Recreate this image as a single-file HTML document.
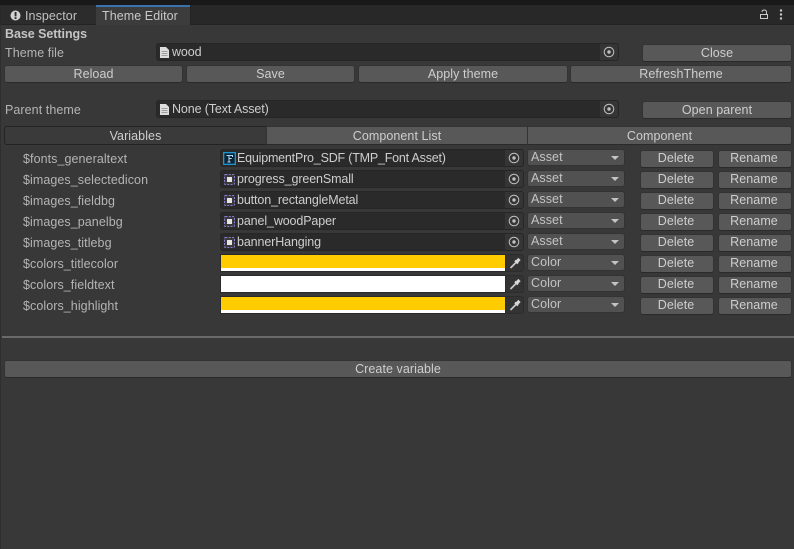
<!DOCTYPE html>
<html><head><meta charset="utf-8"><style>
html,body{margin:0;padding:0;background:#383838}
#p{position:relative;width:794px;height:549px;overflow:hidden;background:#383838;font-family:"Liberation Sans",sans-serif;font-size:12.5px;color:#c4c4c4;letter-spacing:.07px;filter:blur(.3px)}
#p div,#p svg{position:absolute}
.b{background:#585858;border:1px solid #333;border-bottom-color:#2a2a2a;border-radius:3px;box-sizing:border-box;text-align:center;color:#cecece;white-space:nowrap}
.t{height:18px;line-height:16px}
.x{width:74px;height:18px;line-height:15px;padding-right:2px}
.l{white-space:nowrap;line-height:16px;color:#b4b4b4}
.f{background:#2a2a2a;border:1px solid #262626;border-radius:3px;box-sizing:border-box;white-space:nowrap;color:#cecece;letter-spacing:-.12px}
.p{background:#353535;top:0;bottom:0;right:0;width:18px;border-radius:0 2px 2px 0}
.d{background:#515151;border:1px solid #333;border-radius:3px;box-sizing:border-box;color:#c4c4c4;padding-left:3px;line-height:14px}
.d i{position:absolute;right:5px;top:6px;width:0;height:0;border-left:4px solid transparent;border-right:4px solid transparent;border-top:4px solid #c4c4c4}
.s{background:#ffcc00;border:1px solid #2a2a2a;box-sizing:border-box;height:18px;left:220px;width:286px}
.w{position:absolute;left:0;right:0;bottom:0;height:3px;background:#fff}
.e{left:505px;width:19px;height:18px;background:#333;border:1px solid #2c2c2c;border-radius:0 3px 3px 0;box-sizing:border-box}
</style></head><body><div id="p">
<div style="left:0;top:0;width:794px;height:5px;background:#191919"></div>
<div style="left:0;top:5px;width:794px;height:19px;background:#282828"></div>
<div style="left:0;top:24px;width:794px;height:1px;background:#232323"></div>
<div style="left:1px;top:6px;width:95px;height:18px;background:#2c2c2c"></div>
<div style="left:96px;top:5px;width:94px;height:20px;background:#3c3c3c;border-right:1px solid #232323"></div>
<div style="left:96px;top:5px;width:94px;height:2px;background:#3a72b0"></div>
<svg style="left:10px;top:10px" width="11" height="11" viewBox="0 0 11 11"><circle cx="5.5" cy="5.5" r="5" fill="#d2d2d2"/><rect x="4.6" y="2" width="1.9" height="4.4" fill="#2c2c2c"/><rect x="4.6" y="7.2" width="1.9" height="1.8" fill="#2c2c2c"/></svg>
<div class="l" style="left:25px;top:8px;color:#c0c0c0">Inspector</div>
<div class="l" style="left:102px;top:8px;color:#c8c8c8">Theme Editor</div>
<svg style="left:759px;top:9px" width="10" height="11" viewBox="0 0 10 11" fill="none" stroke="#c8c8c8"><rect x="1.5" y="5.5" width="7" height="4" stroke-width="1"/><path d="M3 3Q3 1 5.2 1T7.5 3V5.5" stroke-width="1"/></svg>
<svg style="left:779px;top:9px" width="4" height="11" viewBox="0 0 4 11" fill="#c8c8c8"><circle cx="2" cy="1.5" r="1.2"/><circle cx="2" cy="5.5" r="1.2"/><circle cx="2" cy="9.5" r="1.2"/></svg>

<div class="l" style="left:5px;top:26px;font-weight:bold;color:#c4c4c4;letter-spacing:-.05px">Base Settings</div>
<div class="l" style="left:5px;top:45px">Theme file</div>
<div class="f" style="left:156px;top:43px;width:463px;height:18px;line-height:17px;padding-left:15px">wood<div class="p"></div>
<svg style="left:3px;top:3px" width="9" height="11" viewBox="0 0 9 11"><path d="M0 0H6L9 3V11H0Z" fill="#ddd"/><path d="M1.5 4.5H7.5M1.5 6.5H7.5M1.5 8.5H7.5" stroke="#888" stroke-width=".7"/></svg>
<svg style="right:3px;top:2px" width="12" height="12" viewBox="0 0 12 12"><circle cx="6" cy="6" r="4.8" fill="none" stroke="#c0c0c0"/><circle cx="6" cy="6" r="1.7" fill="#c0c0c0"/></svg></div>
<div class="b t" style="left:642px;top:44px;width:150px">Close</div>
<div class="b t" style="left:4px;top:65px;width:179px">Reload</div>
<div class="b t" style="left:186px;top:65px;width:169px">Save</div>
<div class="b t" style="left:358px;top:65px;width:210px">Apply theme</div>
<div class="b t" style="left:570px;top:65px;width:222px">RefreshTheme</div>

<div class="l" style="left:5px;top:102px">Parent theme</div>
<div class="f" style="left:156px;top:100px;width:463px;height:18px;line-height:17px;padding-left:15px">None (Text Asset)<div class="p"></div>
<svg style="left:3px;top:3px" width="9" height="11" viewBox="0 0 9 11"><path d="M0 0H6L9 3V11H0Z" fill="#ddd"/><path d="M1.5 4.5H7.5M1.5 6.5H7.5M1.5 8.5H7.5" stroke="#888" stroke-width=".7"/></svg>
<svg style="right:3px;top:2px" width="12" height="12" viewBox="0 0 12 12"><circle cx="6" cy="6" r="4.8" fill="none" stroke="#c0c0c0"/><circle cx="6" cy="6" r="1.7" fill="#c0c0c0"/></svg></div>
<div class="b t" style="left:642px;top:101px;width:150px">Open parent</div>

<div class="b" style="left:4px;top:126px;width:263px;height:19px;line-height:18px;background:#3a3a3a;border-color:#232323;border-radius:3px 0 0 3px">Variables</div>
<div class="b" style="left:266px;top:126px;width:262px;height:19px;line-height:18px;border-radius:0">Component List</div>
<div class="b" style="left:527px;top:126px;width:265px;height:19px;line-height:18px;border-radius:0 3px 3px 0">Component</div>

<div class="l" style="left:23px;top:151px">$fonts_generaltext</div>
<div class="l" style="left:23px;top:172px">$images_selectedicon</div>
<div class="l" style="left:23px;top:193px">$images_fieldbg</div>
<div class="l" style="left:23px;top:214px">$images_panelbg</div>
<div class="l" style="left:23px;top:235px">$images_titlebg</div>
<div class="l" style="left:23px;top:256px">$colors_titlecolor</div>
<div class="l" style="left:23px;top:277px">$colors_fieldtext</div>
<div class="l" style="left:23px;top:298px">$colors_highlight</div>

<div class="f" style="left:220px;top:149px;width:304px;height:18px;line-height:17px;padding-left:16px;letter-spacing:-.2px">EquipmentPro_SDF (TMP_Font Asset)<div class="p"></div>
<svg style="left:2px;top:2px" width="13" height="13" viewBox="0 0 13 13"><rect x=".7" y=".7" width="11.6" height="11.6" fill="#123" stroke="#1ba1e2" stroke-width="1.2"/><path d="M3.5 3.5H9.5V5M6 3.5V10M4.5 10H7.5M6 6.5H8.7" fill="none" stroke="#a5dcf6"/></svg>
<svg style="right:3px;top:2px" width="12" height="12" viewBox="0 0 12 12"><circle cx="6" cy="6" r="4.8" fill="none" stroke="#c0c0c0"/><circle cx="6" cy="6" r="1.7" fill="#c0c0c0"/></svg></div>
<div class="f" style="left:220px;top:170px;width:304px;height:18px;line-height:17px;padding-left:16px">progress_greenSmall<div class="p"></div>
<svg style="left:2px;top:2px" width="13" height="13" viewBox="0 0 13 13"><rect x="1.5" y="1.5" width="10" height="10" rx="1" fill="#3a3a3a" stroke="#8a7cd0" stroke-dasharray="2 1.3"/><rect x="4" y="4" width="5" height="5" fill="#e4e4e4"/></svg>
<svg style="right:3px;top:2px" width="12" height="12" viewBox="0 0 12 12"><circle cx="6" cy="6" r="4.8" fill="none" stroke="#c0c0c0"/><circle cx="6" cy="6" r="1.7" fill="#c0c0c0"/></svg></div>
<div class="f" style="left:220px;top:191px;width:304px;height:18px;line-height:17px;padding-left:16px">button_rectangleMetal<div class="p"></div>
<svg style="left:2px;top:2px" width="13" height="13" viewBox="0 0 13 13"><rect x="1.5" y="1.5" width="10" height="10" rx="1" fill="#3a3a3a" stroke="#8a7cd0" stroke-dasharray="2 1.3"/><rect x="4" y="4" width="5" height="5" fill="#e4e4e4"/></svg>
<svg style="right:3px;top:2px" width="12" height="12" viewBox="0 0 12 12"><circle cx="6" cy="6" r="4.8" fill="none" stroke="#c0c0c0"/><circle cx="6" cy="6" r="1.7" fill="#c0c0c0"/></svg></div>
<div class="f" style="left:220px;top:212px;width:304px;height:18px;line-height:17px;padding-left:16px">panel_woodPaper<div class="p"></div>
<svg style="left:2px;top:2px" width="13" height="13" viewBox="0 0 13 13"><rect x="1.5" y="1.5" width="10" height="10" rx="1" fill="#3a3a3a" stroke="#8a7cd0" stroke-dasharray="2 1.3"/><rect x="4" y="4" width="5" height="5" fill="#e4e4e4"/></svg>
<svg style="right:3px;top:2px" width="12" height="12" viewBox="0 0 12 12"><circle cx="6" cy="6" r="4.8" fill="none" stroke="#c0c0c0"/><circle cx="6" cy="6" r="1.7" fill="#c0c0c0"/></svg></div>
<div class="f" style="left:220px;top:233px;width:304px;height:18px;line-height:17px;padding-left:16px">bannerHanging<div class="p"></div>
<svg style="left:2px;top:2px" width="13" height="13" viewBox="0 0 13 13"><rect x="1.5" y="1.5" width="10" height="10" rx="1" fill="#3a3a3a" stroke="#8a7cd0" stroke-dasharray="2 1.3"/><rect x="4" y="4" width="5" height="5" fill="#e4e4e4"/></svg>
<svg style="right:3px;top:2px" width="12" height="12" viewBox="0 0 12 12"><circle cx="6" cy="6" r="4.8" fill="none" stroke="#c0c0c0"/><circle cx="6" cy="6" r="1.7" fill="#c0c0c0"/></svg></div>

<div class="s" style="top:254px"><div class="w"></div></div>
<div class="e" style="top:254px"><svg style="left:2px;top:1px" width="14" height="14" viewBox="0 0 14 14"><path d="M2.5 12L8 6.5" stroke="#c8c8c8" stroke-width="1.8"/><path d="M7 4.5L10 7.5" stroke="#d8d8d8" stroke-width="2"/><path d="M9 5.5L11.5 3" stroke="#d8d8d8" stroke-width="3.2"/></svg></div>
<div class="s" style="top:275px;background:#fff"></div>
<div class="e" style="top:275px"><svg style="left:2px;top:1px" width="14" height="14" viewBox="0 0 14 14"><path d="M2.5 12L8 6.5" stroke="#c8c8c8" stroke-width="1.8"/><path d="M7 4.5L10 7.5" stroke="#d8d8d8" stroke-width="2"/><path d="M9 5.5L11.5 3" stroke="#d8d8d8" stroke-width="3.2"/></svg></div>
<div class="s" style="top:296px"><div class="w"></div></div>
<div class="e" style="top:296px"><svg style="left:2px;top:1px" width="14" height="14" viewBox="0 0 14 14"><path d="M2.5 12L8 6.5" stroke="#c8c8c8" stroke-width="1.8"/><path d="M7 4.5L10 7.5" stroke="#d8d8d8" stroke-width="2"/><path d="M9 5.5L11.5 3" stroke="#d8d8d8" stroke-width="3.2"/></svg></div>

<div class="d" style="left:527px;top:149px;width:98px;height:17px">Asset<i></i></div>
<div class="d" style="left:527px;top:170px;width:98px;height:17px">Asset<i></i></div>
<div class="d" style="left:527px;top:191px;width:98px;height:17px">Asset<i></i></div>
<div class="d" style="left:527px;top:212px;width:98px;height:17px">Asset<i></i></div>
<div class="d" style="left:527px;top:233px;width:98px;height:17px">Asset<i></i></div>
<div class="d" style="left:527px;top:254px;width:98px;height:17px">Color<i></i></div>
<div class="d" style="left:527px;top:275px;width:98px;height:17px">Color<i></i></div>
<div class="d" style="left:527px;top:296px;width:98px;height:17px">Color<i></i></div>

<div class="b x" style="left:640px;top:150px">Delete</div><div class="b x" style="left:718px;top:150px">Rename</div>
<div class="b x" style="left:640px;top:171px">Delete</div><div class="b x" style="left:718px;top:171px">Rename</div>
<div class="b x" style="left:640px;top:192px">Delete</div><div class="b x" style="left:718px;top:192px">Rename</div>
<div class="b x" style="left:640px;top:213px">Delete</div><div class="b x" style="left:718px;top:213px">Rename</div>
<div class="b x" style="left:640px;top:234px">Delete</div><div class="b x" style="left:718px;top:234px">Rename</div>
<div class="b x" style="left:640px;top:255px">Delete</div><div class="b x" style="left:718px;top:255px">Rename</div>
<div class="b x" style="left:640px;top:276px">Delete</div><div class="b x" style="left:718px;top:276px">Rename</div>
<div class="b x" style="left:640px;top:297px">Delete</div><div class="b x" style="left:718px;top:297px">Rename</div>

<div style="left:2px;top:336px;width:792px;height:2px;background:#6a6a6a"></div>
<div class="b" style="left:4px;top:360px;width:788px;height:18px;line-height:17px">Create variable</div>
<div style="left:0;top:24px;width:1px;height:525px;background:#2e2e2e"></div>
</div></body></html>
